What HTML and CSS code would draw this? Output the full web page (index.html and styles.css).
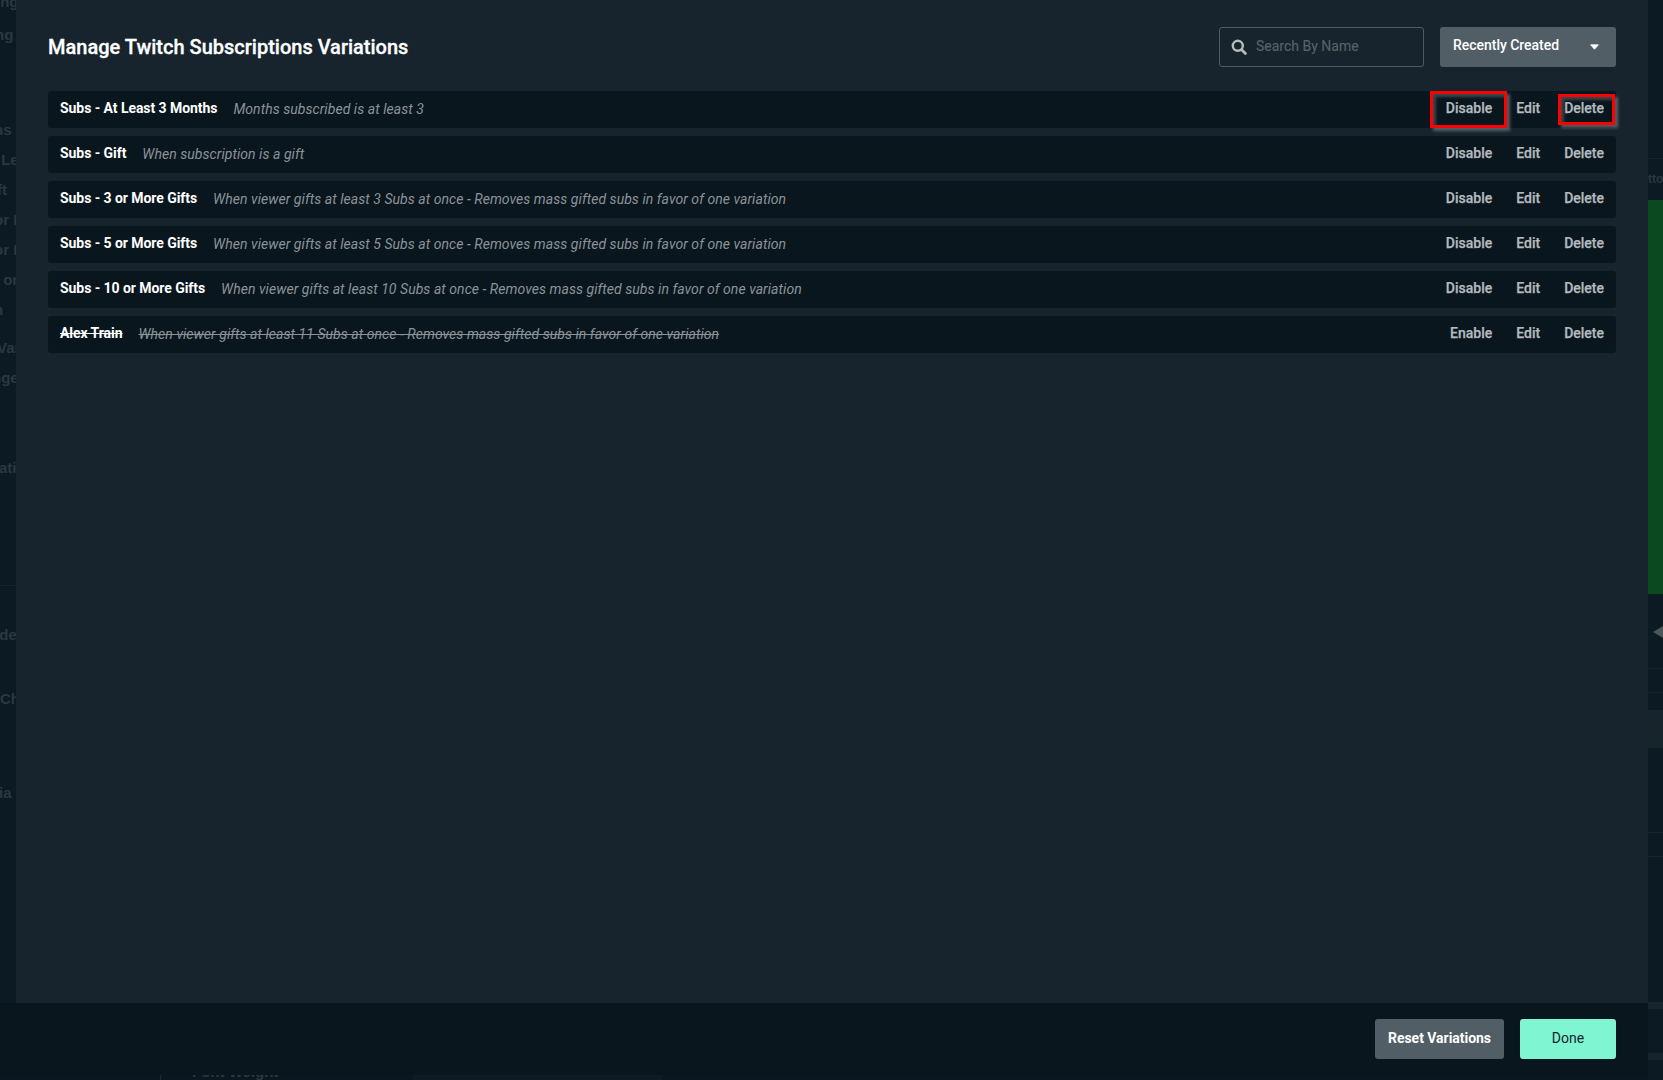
FILE: index.html
```html
<!DOCTYPE html>
<html lang="en">
<head>
<meta charset="utf-8">
<title>Manage Twitch Subscriptions Variations</title>
<link rel="stylesheet" href="styles.css">
</head>
<body>
<div class="backdrop">
  <div class="peek-left">
    <span class="frag f1">ing</span><span class="frag f2">ng</span><span class="frag f3">ns</span><span class="frag f4">&nbsp;Le</span><span class="frag f5">ft</span><span class="frag f6">or M</span><span class="frag f7">or M</span><span class="frag f8">&nbsp;on</span><span class="frag f9">n</span><span class="frag f10">Var</span><span class="frag f11">nge</span><span class="frag f12">atic</span><span class="frag f13">ede</span><span class="frag f14">Ch</span><span class="frag f15">ia</span>
    <i class="rule r1"></i>
  </div>
  <div class="peek-right">
    <span class="frag f16">ttor</span>
    <i class="rule r2"></i>
    <div class="meter"></div>
    <svg class="tri" width="10" height="14" viewBox="0 0 10 14"><path d="M0 7 10 1v12z" fill="#4b565d"/></svg>
    <i class="rule r3"></i><i class="rule r4"></i>
    <div class="block b1"></div>
    <i class="rule r5"></i><i class="rule r6"></i>
    <div class="block b2"></div>
    <div class="block b3"></div>
  </div>
  <div class="peek-bottom">
    <i class="vline"></i>
    <span class="frag f17">Font Weight</span>
    <div class="block b4"></div>
  </div>
</div>

<main class="modal">
  <header class="modal-head">
    <h1 class="modal-title">Manage Twitch Subscriptions Variations</h1>
    <div class="controls">
      <label class="search">
        <svg class="search-icon" width="16" height="16" viewBox="0 0 16 16" fill="none"><circle cx="6.8" cy="6.8" r="5" stroke="#b4babe" stroke-width="2.4"/><path d="M10.7 10.7 14.4 14.4" stroke="#b4babe" stroke-width="2.8" stroke-linecap="round"/></svg>
        <span class="search-text">Search By Name</span>
      </label>
      <div class="select">
        <span>Recently Created</span>
        <svg class="caret" width="9" height="6" viewBox="0 0 9 6"><path d="M.6.8h7.8L4.5 5.2z" fill="#fff" stroke="#fff" stroke-width=".8" stroke-linejoin="round"/></svg>
      </div>
    </div>
  </header>
  <section class="list">
    <article class="row">
      <div class="info"><strong class="name">Subs - At Least 3 Months</strong><em class="desc">Months subscribed is at least 3</em></div>
      <div class="actions"><a class="act act-toggle marked mark-a">Disable</a><a class="act act-edit">Edit</a><a class="act marked mark-b">Delete</a></div>
    </article>
    <article class="row">
      <div class="info"><strong class="name">Subs - Gift</strong><em class="desc">When subscription is a gift</em></div>
      <div class="actions"><a class="act act-toggle">Disable</a><a class="act act-edit">Edit</a><a class="act">Delete</a></div>
    </article>
    <article class="row">
      <div class="info"><strong class="name">Subs - 3 or More Gifts</strong><em class="desc">When viewer gifts at least 3 Subs at once - Removes mass gifted subs in favor of one variation</em></div>
      <div class="actions"><a class="act act-toggle">Disable</a><a class="act act-edit">Edit</a><a class="act">Delete</a></div>
    </article>
    <article class="row">
      <div class="info"><strong class="name">Subs - 5 or More Gifts</strong><em class="desc">When viewer gifts at least 5 Subs at once - Removes mass gifted subs in favor of one variation</em></div>
      <div class="actions"><a class="act act-toggle">Disable</a><a class="act act-edit">Edit</a><a class="act">Delete</a></div>
    </article>
    <article class="row">
      <div class="info"><strong class="name">Subs - 10 or More Gifts</strong><em class="desc">When viewer gifts at least 10 Subs at once - Removes mass gifted subs in favor of one variation</em></div>
      <div class="actions"><a class="act act-toggle">Disable</a><a class="act act-edit">Edit</a><a class="act">Delete</a></div>
    </article>
    <article class="row row-off">
      <div class="info"><strong class="name">Alex Train</strong><em class="desc">When viewer gifts at least 11 Subs at once - Removes mass gifted subs in favor of one variation</em></div>
      <div class="actions"><a class="act act-toggle">Enable</a><a class="act act-edit">Edit</a><a class="act">Delete</a></div>
    </article>
  </section>
</main>

<footer class="modal-foot">
  <button class="btn btn-reset">Reset Variations</button>
  <button class="btn btn-done">Done</button>
</footer>
</body>
</html>
```

FILE: styles.css
```css
*, *::before, *::after { box-sizing: border-box; }
html, body { margin: 0; height: 1080px; overflow: hidden; }
body {
  position: relative;
  width: 1663px;
  background: #0a1720;
  font-family: Roboto, "Liberation Sans", sans-serif;
  color: #fff;
}

/* dimmed page behind the dialog */
.backdrop { position: absolute; inset: 0; }
.peek-left, .peek-right, .peek-bottom { position: absolute; overflow: hidden; }
.peek-left { left: 0; top: 0; width: 16px; height: 1003px; background: #0b1a23; }
.peek-right { left: 1648px; top: 0; width: 15px; height: 1080px; background: #0c1a23; }
.peek-bottom { left: 0; top: 1075px; width: 1648px; height: 5px; }

.frag {
  position: absolute;
  left: 0;
  font: 700 15px/18px "Liberation Sans", sans-serif;
  color: #2c3840;
  white-space: nowrap;
}
.f1 { top: -7px; left: -4px; }
.f2 { top: 26px; left: -5px; }
.f3 { top: 121px; left: -6px; }
.f4 { top: 151px; left: -3px; }
.f5 { top: 181px; left: -3px; }
.f6 { top: 211px; left: -6px; }
.f7 { top: 241px; left: -6px; }
.f8 { top: 271px; left: -1px; }
.f9 { top: 301px; left: -6px; }
.f10 { top: 339px; left: -3px; }
.f11 { top: 369px; left: -8px; }
.f12 { top: 459px; left: -1px; }
.f13 { top: 626px; left: -9px; }
.f14 { top: 690px; left: 0; }
.f15 { top: 784px; left: -1px; }
.f16 { top: 170px; left: 0; font-size: 12px; }
.f17 { top: -12px; left: 192px; }

.rule { position: absolute; left: 0; width: 100%; height: 1px; background: #16242d; }
.r1 { top: 585px; }
.r2 { top: 158px; }
.r3 { top: 668px; }
.r4 { top: 692px; }
.r5 { top: 832px; }
.r6 { top: 856px; }
.meter { position: absolute; left: 0; top: 200px; width: 100%; height: 394px; background: #0b4a20; }
.tri { position: absolute; left: 5px; top: 625px; }
.block { position: absolute; background: #17242c; }
.b1 { left: 0; top: 710px; width: 100%; height: 38px; }
.b2 { left: 0; top: 1002px; width: 100%; height: 7px; }
.b3 { left: 0; top: 1053px; width: 100%; height: 7px; }
.b4 { left: 413px; top: 0; width: 249px; height: 5px; background: #0e1b24; }
.vline { position: absolute; left: 160px; top: 0; width: 1px; height: 5px; background: #1c2932; }

/* dialog */
.modal {
  position: absolute;
  left: 16px;
  top: 0;
  width: 1632px;
  height: 1003px;
  padding: 0 32px;
  background: #17242d;
}
.modal-head {
  display: flex;
  align-items: center;
  justify-content: space-between;
  height: 91px;
  padding-top: 3px;
}
.modal-title {
  margin: 0;
  font-size: 20px;
  line-height: 28px;
  font-weight: 500;
  -webkit-text-stroke: .3px #fff;
  color: #fff;
}
.controls { display: flex; gap: 16px; }
.search {
  display: flex;
  align-items: center;
  gap: 9px;
  width: 205px;
  height: 40px;
  padding: 0 11px;
  border: 1px solid #4f5b63;
  border-radius: 3px;
}
.search-icon { flex: none; }
.search-text { position: relative; top: -1px; font-size: 14px; color: #566269; -webkit-text-stroke: .15px #566269; }
.select {
  display: flex;
  align-items: center;
  justify-content: space-between;
  width: 176px;
  height: 40px;
  padding: 0 17px 0 13px;
  background: #515e66;
  border-radius: 3px;
  font-size: 14px;
  font-weight: 500;
  letter-spacing: -.03px;
  color: #fff;
}
.select span { position: relative; top: -2px; }
.caret { flex: none; }

.list { display: flex; flex-direction: column; gap: 8px; }
.row {
  display: flex;
  align-items: center;
  justify-content: space-between;
  height: 37px;
  padding: 0 12px;
  background: #0a161e;
  border-radius: 3px;
  font-size: 14px;
}
.info { display: flex; align-items: center; gap: 16px; }
.name { font-weight: 700; letter-spacing: -.06px; color: #fff; position: relative; top: -2px; }
.desc { font-style: italic; letter-spacing: .05px; color: #8b9398; position: relative; top: -1px; }
.row-off .name, .row-off .desc { text-decoration: line-through; }
.actions { display: flex; }
.act { position: relative; top: -2px; font-weight: 500; color: #b4babe; -webkit-text-stroke: .25px #b4babe; }
.act-edit { margin: 0 24px; }
.marked::after {
  content: "";
  position: absolute;
  border: 3px solid #f00;
  box-shadow: 3px 3px 3px rgba(120, 128, 134, .65), inset 3px 3px 3px rgba(120, 128, 134, .45);
}
.mark-a::after { left: -16px; top: -9px; width: 77px; height: 37px; }
.mark-b::after { left: -6px; top: -6px; width: 57px; height: 31px; }

/* footer */
.modal-foot {
  position: absolute;
  left: 0;
  top: 1003px;
  width: 1648px;
  height: 72px;
  display: flex;
  justify-content: flex-end;
  align-items: flex-start;
  gap: 16px;
  padding: 16px 32px 0 0;
  background: #09161d;
}
.btn {
  height: 40px;
  border: 0;
  border-radius: 3px;
  padding-bottom: 4px;
  font: 500 14px Roboto, "Liberation Sans", sans-serif;
}
.btn-reset { width: 129px; background: #515e66; color: #fff; font-weight: 700; letter-spacing: -.03px; }
.btn-done { width: 96px; background: #80f5d2; color: #17242d; font-weight: 400; letter-spacing: .1px; }
```
